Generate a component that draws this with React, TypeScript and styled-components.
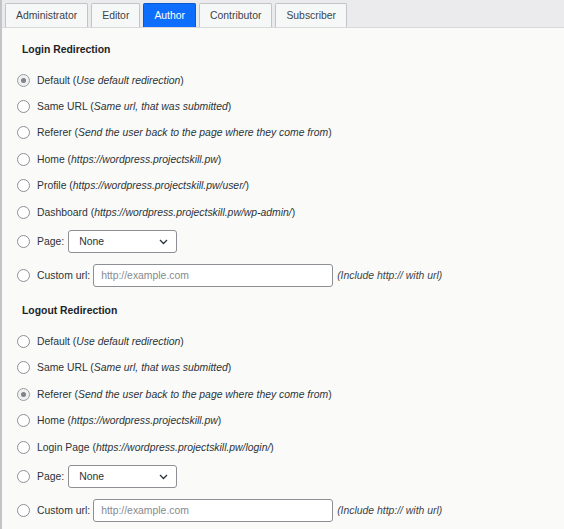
import React, { useState } from 'react';
import styled, { createGlobalStyle } from 'styled-components';

const GlobalStyle = createGlobalStyle`
  html, body {
    margin: 0;
    padding: 0;
    background: #ebeaec;
  }
  body {
    font-family: "Liberation Sans", Arial, sans-serif;
    font-size: 10.4px;
    color: #2c3338;
  }
`;

const Page = styled.div`
  width: 564px;
  height: 529px;
  overflow: hidden;
  border-left: 2px solid #c3c4c7;
  box-sizing: border-box;
  display: flex;
  flex-direction: column;
`;

const TabBar = styled.div`
  display: flex;
  gap: 3px;
  padding: 3px 0 0 3px;
  border-bottom: 1px solid #d8d8da;
  height: 25px;
`;

const Tab = styled.button<{ $active?: boolean }>`
  font-family: inherit;
  font-size: 10.4px;
  height: 24px;
  padding: 0 10px;
  border: 1px solid ${(p) => (p.$active ? '#0a58ca' : '#c3c4c7')};
  border-bottom: none;
  border-radius: 2px 2px 0 0;
  background: ${(p) => (p.$active ? '#0d6efd' : '#f6f7f7')};
  color: ${(p) => (p.$active ? '#ffffff' : '#3c434a')};
  cursor: pointer;
`;

const Panel = styled.div`
  flex: 1;
  background: #fafbf9;
  padding: 12px 0 0 15px;
`;

const Section = styled.div`
  & + & {
    margin-top: 7px;
  }
`;

const Heading = styled.h3`
  margin: 0 0 7px 5px;
  height: 20px;
  line-height: 20px;
  font-size: 10.4px;
  font-weight: bold;
  color: #1d2327;
`;

const Row = styled.label<{ $h: number }>`
  display: flex;
  align-items: center;
  height: ${(p) => p.$h}px;
  gap: 7px;
`;

const Radio = styled.input.attrs({ type: 'radio' })`
  appearance: none;
  margin: 0;
  width: 13px;
  height: 13px;
  border-radius: 50%;
  border: 1px solid #8c8f94;
  background: #fff;
  box-sizing: border-box;
  display: grid;
  place-items: center;
  flex-shrink: 0;

  &:checked {
    border-color: #9a9da2;
    background: #f0f0f1;
  }
  &:checked::before {
    content: '';
    width: 5px;
    height: 5px;
    border-radius: 50%;
    background: #7e8388;
  }
`;

const Text = styled.span`
  display: flex;
  align-items: center;
  gap: 4px;
  white-space: nowrap;
`;

const Em = styled.em`
  font-style: italic;
`;

const SelectWrap = styled.span`
  position: relative;
  display: inline-flex;
`;

const Select = styled.select`
  appearance: none;
  font-family: inherit;
  font-size: 10.4px;
  color: #2c3338;
  width: 109px;
  height: 23px;
  padding: 0 24px 0 10px;
  border: 1px solid #8c8f94;
  border-radius: 3px;
  background: #fff;
`;

const Chevron = styled.svg`
  position: absolute;
  right: 9px;
  top: 9px;
  pointer-events: none;
`;

const UrlInput = styled.input`
  font-family: inherit;
  font-size: 10.4px;
  width: 240px;
  height: 23px;
  box-sizing: border-box;
  padding: 0 7px;
  border: 1px solid #8c8f94;
  border-radius: 3px;
  background: #fff;
  margin-left: -1px;

  &::placeholder {
    color: #868a8f;
  }
`;

const Hint = styled.em`
  font-style: italic;
  color: #3c434a;
`;

const ROW = 26.4;

type Option = { label: string; note: string };

const loginOptions: Option[] = [
  { label: 'Default', note: 'Use default redirection' },
  { label: 'Same URL', note: 'Same url, that was submitted' },
  { label: 'Referer', note: 'Send the user back to the page where they come from' },
  { label: 'Home', note: 'https://wordpress.projectskill.pw' },
  { label: 'Profile', note: 'https://wordpress.projectskill.pw/user/' },
  { label: 'Dashboard', note: 'https://wordpress.projectskill.pw/wp-admin/' },
];

const logoutOptions: Option[] = [
  { label: 'Default', note: 'Use default redirection' },
  { label: 'Same URL', note: 'Same url, that was submitted' },
  { label: 'Referer', note: 'Send the user back to the page where they come from' },
  { label: 'Home', note: 'https://wordpress.projectskill.pw' },
  { label: 'Login Page', note: 'https://wordpress.projectskill.pw/login/' },
];

const RedirectSection = ({
  title,
  name,
  options,
  initial,
}: {
  title: string;
  name: string;
  options: Option[];
  initial: string;
}) => {
  const [value, setValue] = useState(initial);

  return (
    <Section>
      <Heading>{title}</Heading>
      {options.map((o) => (
        <Row key={o.label} $h={ROW}>
          <Radio
            name={name}
            checked={value === o.label}
            onChange={() => setValue(o.label)}
          />
          <span>
            {o.label} (<Em>{o.note}</Em>)
          </span>
        </Row>
      ))}
      <Row $h={32}>
        <Radio name={name} checked={value === 'page'} onChange={() => setValue('page')} />
        <Text>
          Page:
          <SelectWrap>
            <Select defaultValue="none">
              <option value="none">None</option>
            </Select>
            <Chevron width="9" height="6" viewBox="0 0 9 6">
              <path d="M1 1l3.5 3.5L8 1" fill="none" stroke="#2c3338" strokeWidth="1.3" />
            </Chevron>
          </SelectWrap>
        </Text>
      </Row>
      <Row $h={37}>
        <Radio name={name} checked={value === 'custom'} onChange={() => setValue('custom')} />
        <Text>
          Custom url:
          <UrlInput placeholder="http://example.com" />
          <Hint>(Include http:// with url)</Hint>
        </Text>
      </Row>
    </Section>
  );
};

const tabs = ['Administrator', 'Editor', 'Author', 'Contributor', 'Subscriber'];

export default function App() {
  const [tab, setTab] = useState('Author');

  return (
    <>
      <GlobalStyle />
      <Page>
        <TabBar>
          {tabs.map((t) => (
            <Tab key={t} $active={t === tab} onClick={() => setTab(t)}>
              {t}
            </Tab>
          ))}
        </TabBar>
        <Panel>
          <RedirectSection
            title="Login Redirection"
            name="login"
            options={loginOptions}
            initial="Default"
          />
          <RedirectSection
            title="Logout Redirection"
            name="logout"
            options={logoutOptions}
            initial="Referer"
          />
        </Panel>
      </Page>
    </>
  );
}
